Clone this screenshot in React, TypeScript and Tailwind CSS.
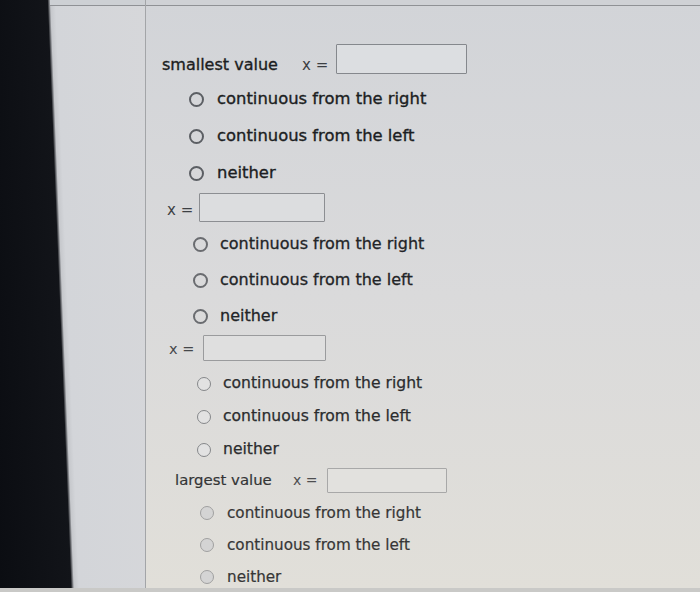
const options = ["continuous from the right", "continuous from the left", "neither"];

type Section = {
  label?: string;
  wrap: string;
  headCls: string;
  labelCls: string;
  xCls: string;
  inputCls: string;
  rowsCls: string;
  rowCls: string;
  circleCls: string;
  textCls: string;
};

const sections: Section[] = [
  {
    label: "smallest value",
    wrap: "ml-[16px] mt-[38px]",
    headCls: "h-[30px]",
    labelCls: "w-[140px] pt-[12px] text-[16px] text-[#1c1e22] [-webkit-text-stroke:0.35px_#1c1e22]",
    xCls: "w-[34px] pt-[12px] text-[15px] text-[#3b3e43]",
    inputCls: "w-[131px] h-[30px] border-[#85888d] bg-[#dcdee1]",
    rowsCls: "mt-[7px] ml-[27px]",
    rowCls: "h-[37px] gap-[13px]",
    circleCls: "w-[15px] h-[15px] border-2 border-[#5c5f64]",
    textCls: "text-[16.4px] text-[#1c1e22] [-webkit-text-stroke:0.35px_#1c1e22]",
  },
  {
    wrap: "ml-[21px] mt-[1px]",
    headCls: "h-[29px]",
    labelCls: "",
    xCls: "w-[32px] pt-[5px] text-[15px] text-[#3d4044]",
    inputCls: "w-[126px] h-[29px] border-[#8c8e92] bg-[#dcdddf]",
    rowsCls: "mt-[4px] ml-[26px]",
    rowCls: "h-[36px] gap-[12px]",
    circleCls: "w-[15px] h-[15px] border-2 border-[#6a6c70]",
    textCls: "text-[16px] text-[#222427] [-webkit-text-stroke:0.3px_#222427]",
  },
  {
    wrap: "ml-[23px] mt-[1px]",
    headCls: "h-[26px]",
    labelCls: "",
    xCls: "w-[34px] pt-[4px] text-[14.5px] text-[#45474a]",
    inputCls: "w-[123px] h-[26px] border-[#9a9b9d] bg-[#dfdfdf]",
    rowsCls: "mt-[6px] ml-[28px]",
    rowCls: "h-[33px] gap-[12px]",
    circleCls: "w-[14px] h-[14px] border-[1.5px] border-[#85878a] bg-[#e2e2e2]",
    textCls: "text-[15.6px] text-[#2b2c2e] [-webkit-text-stroke:0.25px_#2b2c2e]",
  },
  {
    label: "largest value",
    wrap: "ml-[29px] mt-[2px]",
    headCls: "h-[25px]",
    labelCls: "w-[118px] text-[14.9px] text-[#333435] [-webkit-text-stroke:0.2px_#333435]",
    xCls: "w-[34px] text-[14px] text-[#4d4e50]",
    inputCls: "w-[120px] h-[25px] border-[#a8a8a8] bg-[#e2e1de]",
    rowsCls: "mt-[4px] ml-[25px]",
    rowCls: "h-[32px] gap-[13px]",
    circleCls: "w-[14px] h-[14px] border-[1.5px] border-[#a0a0a0] bg-[#d4d4d4]",
    textCls: "text-[15.2px] text-[#363636] [-webkit-text-stroke:0.2px_#363636]",
  },
];

export default function App() {
  return (
    <div className="w-[700px] h-[592px] flex flex-col overflow-hidden font-['DejaVu_Sans','Liberation_Sans',sans-serif]">
      <div className="h-[588px] flex bg-linear-to-b from-[#d2d4d8] via-[#dadadb] to-[#e1dfd9]">
        {/* bezel + left margin of the page */}
        <div className="w-[146px] shrink-0 flex flex-col border-r border-[#a3a5a8] bg-[linear-gradient(87.7deg,#0b0d12_0px,#121419_71px,#c6c8cc_74px,#d3d5d9_79px,#d6d7da_100%)]">
          <div className="h-[6px] ml-[50px] border-b border-[#8f9195] bg-[#cdd0d4]" />
        </div>

        <div className="flex-1 flex flex-col">
          <div className="h-[6px] shrink-0 border-b border-[#8f9195] bg-[#cfd1d5]" />
          {sections.map((s, i) => (
            <div key={i} className={s.wrap}>
              <div className={`flex items-center ${s.headCls}`}>
                {s.label && <span className={s.labelCls}>{s.label}</span>}
                <span className={s.xCls}>x =</span>
                <div className={`shrink-0 border rounded-[1px] ${s.inputCls}`} />
              </div>
              <div className={s.rowsCls}>
                {options.map((o) => (
                  <div key={o} className={`flex items-center ${s.rowCls}`}>
                    <span className={`shrink-0 rounded-full ${s.circleCls}`} />
                    <span className={`whitespace-nowrap ${s.textCls}`}>{o}</span>
                  </div>
                ))}
              </div>
            </div>
          ))}
        </div>
      </div>
      <div className="h-[4px] bg-[#c9c9c7]" />
    </div>
  );
}
